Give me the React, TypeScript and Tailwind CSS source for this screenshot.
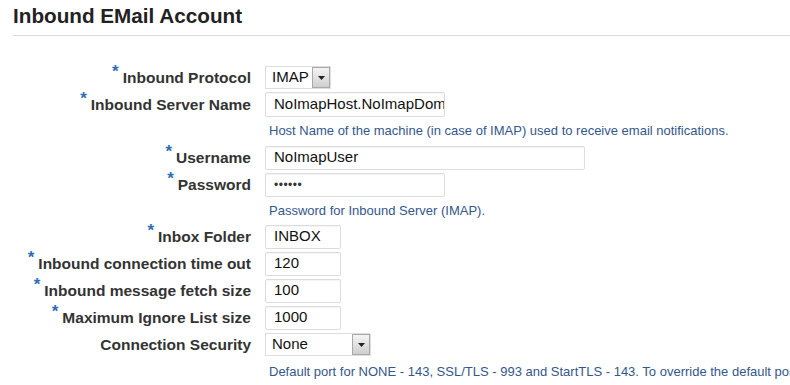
import React from "react";

const Star = () => (
  <span className="relative -top-[6px] mr-[4px] text-[17px] font-bold leading-none text-[#2f6db5]">*</span>
);

function Label({ text, req = true }: { text: string; req?: boolean }) {
  return (
    <div className="flex items-center justify-end whitespace-nowrap text-[15.5px] font-bold text-[#333]">
      {req && <Star />}
      <span>{text}</span>
    </div>
  );
}

function Box({ value, w, h = "h-[24px]", small = false }: { value: string; w: string; h?: string; small?: boolean }) {
  return (
    <div
      className={`${w} ${h} flex items-center overflow-hidden whitespace-nowrap rounded-[2px] border border-[#dcdcdc] bg-white pl-[8px] text-[#111] shadow-[inset_0_1px_1px_rgba(0,0,0,0.04)]`}
    >
      <span className={small ? "text-[12px] tracking-[0.5px] text-[#333]" : "text-[15px]"}>{value}</span>
    </div>
  );
}

function Select({ value, w }: { value: string; w: string }) {
  return (
    <div className={`${w} flex h-[23px] items-stretch border border-[#dedede] bg-white`}>
      <div className="flex flex-1 items-center pl-[6px] text-[15px] text-[#111]">{value}</div>
      <div className="flex w-[18px] items-center justify-center border border-[#a9a9a9] bg-gradient-to-b from-[#f4f4f4] to-[#cfcfcf]">
        <svg width="7" height="4" viewBox="0 0 7 4">
          <path d="M0 0 L7 0 L3.5 4 Z" fill="#222" />
        </svg>
      </div>
    </div>
  );
}

function Row({ label, children, req = true }: { label: string; children: React.ReactNode; req?: boolean }) {
  return (
    <div className="grid h-[27px] grid-cols-[251px_1fr] items-center gap-x-[14px]">
      <Label text={label} req={req} />
      <div className="flex items-center">{children}</div>
    </div>
  );
}

function Help({ text, h }: { text: string; h: string }) {
  return (
    <div className={`grid ${h} grid-cols-[251px_1fr] items-center gap-x-[18px]`}>
      <div />
      <div className="whitespace-nowrap text-[13px] text-[#34578c]">{text}</div>
    </div>
  );
}

export default function App() {
  return (
    <div className="h-[385px] w-[790px] overflow-hidden bg-white font-['Liberation_Sans',Arial,sans-serif]">
      <div className="pl-[13px]">
        <h1 className="pt-[4px] text-[20.7px] font-bold leading-[24px] text-[#222]">Inbound EMail Account</h1>
        <div className="mt-[7px] h-px bg-[#dadada]" />
      </div>
      <div className="mt-[28px]">
        <Row label="Inbound Protocol">
          <Select value="IMAP" w="w-[66px]" />
        </Row>
        <Row label="Inbound Server Name">
          <Box value="NoImapHost.NoImapDomain" w="w-[180px]" h="h-[25px]" />
        </Row>
        <Help h="h-[26px]" text="Host Name of the machine (in case of IMAP) used to receive email notifications." />
        <Row label="Username">
          <Box value="NoImapUser" w="w-[320px]" />
        </Row>
        <Row label="Password">
          <Box value="••••••" w="w-[180px]" small />
        </Row>
        <Help h="h-[25px]" text="Password for Inbound Server (IMAP)." />
        <Row label="Inbox Folder">
          <Box value="INBOX" w="w-[76px]" />
        </Row>
        <Row label="Inbound connection time out">
          <Box value="120" w="w-[76px]" />
        </Row>
        <Row label="Inbound message fetch size">
          <Box value="100" w="w-[76px]" />
        </Row>
        <Row label="Maximum Ignore List size">
          <Box value="1000" w="w-[76px]" />
        </Row>
        <Row label="Connection Security" req={false}>
          <Select value="None" w="w-[106px]" />
        </Row>
        <Help
          h="h-[27px]"
          text="Default port for NONE - 143, SSL/TLS - 993 and StartTLS - 143. To override the default port, please specify the port."
        />
      </div>
    </div>
  );
}
